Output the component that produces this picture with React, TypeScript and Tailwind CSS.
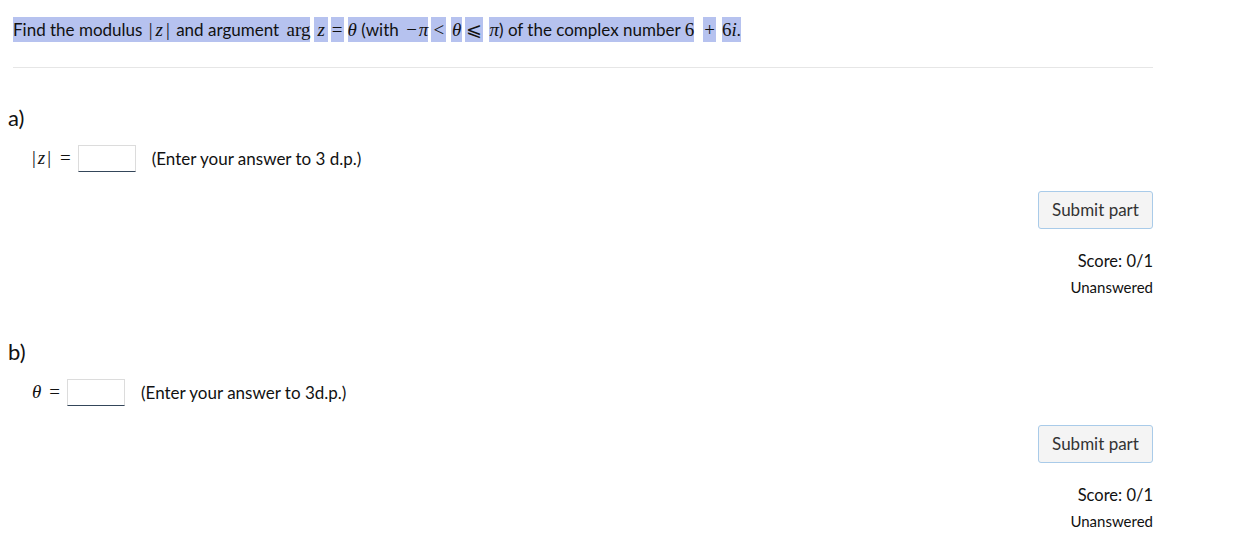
import React from "react";

const SANS = "font-['Lato','Liberation_Sans',sans-serif]";
const SERIF = "font-['Liberation_Serif','DejaVu_Serif',serif]";

function Seg({ children, className = "" }: { children: React.ReactNode; className?: string }) {
  return (
    <span className={`inline-block h-[25px] leading-[25px] bg-[#b6c2ef] align-top ${className}`}>
      {children}
    </span>
  );
}

function M({ children, i = false, className = "" }: { children: React.ReactNode; i?: boolean; className?: string }) {
  return <span className={`${SERIF} text-[19px] ${i ? "italic" : ""} ${className}`}>{children}</span>;
}

function AnswerInput() {
  return (
    <div className="w-[58px] h-[27px] bg-white border border-[#dcdcdc] border-b-[#34465a]" />
  );
}

function Part({
  label,
  math,
  hint,
}: {
  label: string;
  math: React.ReactNode;
  hint: string;
}) {
  return (
    <div className="flex flex-col">
      <div className="pl-[8px] h-[28px] leading-[28px] text-[22px] text-[#111]">{label}</div>
      <div className="mt-[13px] flex items-center h-[27px] pl-[32px]">
        <div className="flex items-center text-[#111]">{math}</div>
        <div className="ml-[7px]">
          <AnswerInput />
        </div>
        <div className="ml-[16px] text-[17px] text-[#111]">{hint}</div>
      </div>
      <div className="mt-[19px] flex justify-end">
        <button className="w-[115px] h-[38px] rounded-[3px] border border-[#a9cbe9] bg-[#f4f4f4] text-[17px] text-[#333]">
          Submit part
        </button>
      </div>
      <div className="mt-[20px] flex flex-col items-end text-[#111]">
        <div className="h-[24px] leading-[24px] text-[16.5px]">Score: 0/1</div>
        <div className="mt-[4px] h-[20px] leading-[20px] text-[15px]">Unanswered</div>
      </div>
    </div>
  );
}

export default function App() {
  return (
    <div className={`${SANS} bg-white w-[1258px] h-[551px] overflow-hidden`}>
      <div className="w-[1153px]">
        <div className="pl-[13px] pt-[17px] whitespace-nowrap text-[17px] text-[#111] h-[42px]">
          <Seg>
            Find the modulus <M className="ml-[2px]">|</M>
            <M i className="mx-[3px]">z</M>
            <M className="mr-[2px]">|</M> and argument <M className="ml-[3px]">arg</M>
          </Seg>
          <Seg className="ml-[4px] px-[3px]">
            <M i>z</M>
          </Seg>
          <Seg className="ml-[3px] px-[1px]">
            <M>=</M>
          </Seg>
          <Seg className="ml-[4px]">
            <M i>θ</M> (with <M className="ml-[3px]">−</M>
            <M i className="ml-[2px]">π</M>
          </Seg>
          <Seg className="ml-[3px] px-[2px]">
            <M>&lt;</M>
          </Seg>
          <Seg className="ml-[5px] px-[1px]">
            <M i>θ</M>
          </Seg>
          <Seg className="ml-[3px] px-[1px]">
            <M>⩽</M>
          </Seg>
          <Seg className="ml-[6px]">
            <M i>π</M>) of the complex number <M>6</M>
          </Seg>
          <Seg className="ml-[9px] px-[1px]">
            <M>+</M>
          </Seg>
          <Seg className="ml-[6px]">
            <M>6</M>
            <M i>i</M>.
          </Seg>
        </div>
        <div className="ml-[13px] mt-[25px] border-t border-[#e6e6e6]" />
        <div className="mt-[36px]">
          <Part
            label="a)"
            math={
              <>
                <M>|</M>
                <M i className="mx-[2px]">z</M>
                <M>|</M>
                <span className="ml-[9px]">
                  <M>=</M>
                </span>
              </>
            }
            hint="(Enter your answer to 3 d.p.)"
          />
        </div>
        <div className="mt-[41px]">
          <Part
            label="b)"
            math={
              <>
                <M i>θ</M>
                <span className="ml-[8px]">
                  <M>=</M>
                </span>
              </>
            }
            hint="(Enter your answer to 3d.p.)"
          />
        </div>
      </div>
    </div>
  );
}
